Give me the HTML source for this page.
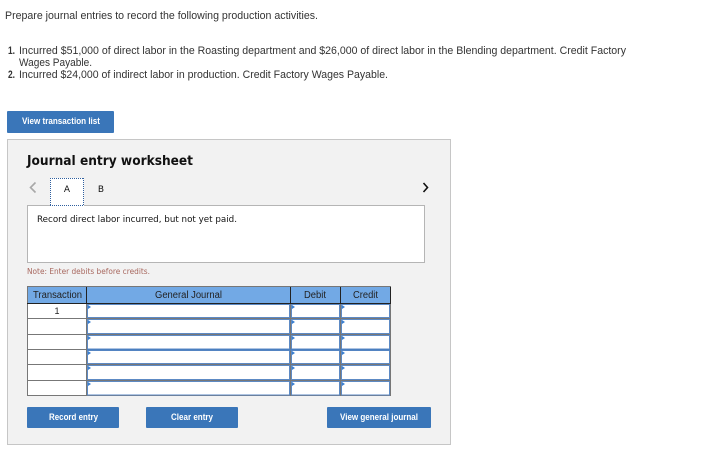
<!DOCTYPE html>
<html><head><meta charset="utf-8"><style>
html,body{margin:0;padding:0;background:#fff;width:719px;height:470px;overflow:hidden}
svg{display:block}
.p{font-family:"Liberation Sans",sans-serif;font-size:11px;fill:#333}
.v{font-family:"DejaVu Sans",sans-serif;fill:#111}
.b{font-family:"Liberation Sans",sans-serif;font-weight:bold;font-size:9px;fill:#fff}
.h{font-family:"Liberation Sans",sans-serif;font-size:10px;fill:#222}
</style></head><body>
<svg width="719" height="470" viewBox="0 0 719 470" xmlns="http://www.w3.org/2000/svg">
<text class="p" x="5" y="19" textLength="313" lengthAdjust="spacingAndGlyphs">Prepare journal entries to record the following production activities.</text>
<text class="p" x="8" y="54" textLength="7" lengthAdjust="spacingAndGlyphs" font-weight="bold">1.</text>
<text class="p" x="19" y="54" textLength="607" lengthAdjust="spacingAndGlyphs">Incurred $51,000 of direct labor in the Roasting department and $26,000 of direct labor in the Blending department. Credit Factory</text>
<text class="p" x="19" y="66" textLength="73" lengthAdjust="spacingAndGlyphs">Wages Payable.</text>
<text class="p" x="8" y="78" textLength="7" lengthAdjust="spacingAndGlyphs" font-weight="bold">2.</text>
<text class="p" x="19" y="78" textLength="369" lengthAdjust="spacingAndGlyphs">Incurred $24,000 of indirect labor in production. Credit Factory Wages Payable.</text>

<rect x="7" y="111" width="107" height="22" rx="1" fill="#3a76b9"/>
<text class="b" x="22" y="124" textLength="78" lengthAdjust="spacingAndGlyphs">View transaction list</text>

<rect x="7.5" y="139.5" width="443" height="305" fill="#f2f2f2" stroke="#c6c6c6"/>
<text class="v" x="27" y="165" font-size="13" font-weight="bold" textLength="166" lengthAdjust="spacingAndGlyphs">Journal entry worksheet</text>
<path d="M35.5 182.5L30.5 187.5L35.5 192.5" fill="none" stroke="#a8a8a8" stroke-width="1.6"/>
<path d="M423.5 183L427.5 187.5L423.5 192" fill="none" stroke="#111" stroke-width="1.6"/>

<rect x="27.5" y="205.5" width="397" height="57" fill="#fff" stroke="#b5b5b5"/>
<rect x="50" y="178" width="34" height="28" fill="#fff"/>
<g stroke="#2f5f9e" stroke-width="1" stroke-dasharray="1 1" fill="none" shape-rendering="crispEdges">
<path d="M50 178.5H84"/><path d="M50 205.5H84"/><path d="M50.5 178V206"/><path d="M83.5 178V206"/>
</g>
<text class="v" x="67" y="192" font-size="9" text-anchor="middle">A</text>
<text class="v" x="101" y="192" font-size="9" text-anchor="middle">B</text>
<text class="v" x="37" y="222" font-size="9" textLength="200" lengthAdjust="spacingAndGlyphs">Record direct labor incurred, but not yet paid.</text>
<text class="v" x="27" y="274" font-size="7.5" style="fill:#a8685f" textLength="123" lengthAdjust="spacingAndGlyphs">Note: Enter debits before credits.</text>

<!-- table -->
<rect x="27" y="286" width="364" height="110" fill="#777"/>
<rect x="28" y="287" width="362" height="16" fill="#72a9e5"/>
<rect x="27" y="303" width="364" height="1" fill="#222"/>
<rect x="86" y="287" width="1" height="17" fill="#222"/>
<rect x="290" y="287" width="1" height="17" fill="#222"/>
<rect x="340" y="287" width="1" height="17" fill="#222"/>
<rect x="390" y="287" width="1" height="17" fill="#222"/>
<text class="h" x="33" y="298" textLength="49" lengthAdjust="spacingAndGlyphs">Transaction</text>
<text class="h" x="155" y="298" textLength="67" lengthAdjust="spacingAndGlyphs">General Journal</text>
<text class="h" x="304" y="298" textLength="22" lengthAdjust="spacingAndGlyphs">Debit</text>
<text class="h" x="353" y="298" textLength="25" lengthAdjust="spacingAndGlyphs">Credit</text>

<g fill="#fff">
<rect x="28" y="304" width="58" height="14"/><rect x="28" y="319" width="58" height="15"/><rect x="28" y="335" width="58" height="14"/><rect x="28" y="350" width="58" height="14"/><rect x="28" y="365" width="58" height="15"/><rect x="28" y="381" width="58" height="14"/>
</g>
<text class="h" x="57" y="314" text-anchor="middle" style="font-size:9px">1</text>

<!-- input cells -->
<g fill="#fff" stroke="#5d8ac4" stroke-width="1">
<rect x="87.5" y="304.5" width="202" height="13"/><rect x="291.5" y="304.5" width="48" height="13"/><rect x="341.5" y="304.5" width="48" height="13"/>
<rect x="87.5" y="319.5" width="202" height="14"/><rect x="291.5" y="319.5" width="48" height="14"/><rect x="341.5" y="319.5" width="48" height="14"/>
<rect x="87.5" y="335.5" width="202" height="13.5"/><rect x="291.5" y="335.5" width="48" height="13.5"/><rect x="341.5" y="335.5" width="48" height="13.5"/>
<rect x="87.5" y="350.5" width="202" height="13"/><rect x="291.5" y="350.5" width="48" height="13"/><rect x="341.5" y="350.5" width="48" height="13"/>
<rect x="87.5" y="365.5" width="202" height="14"/><rect x="291.5" y="365.5" width="48" height="14"/><rect x="341.5" y="365.5" width="48" height="14"/>
<rect x="87.5" y="381.5" width="202" height="13.5"/><rect x="291.5" y="381.5" width="48" height="13.5"/><rect x="341.5" y="381.5" width="48" height="13.5"/>
</g>
<rect x="87" y="349" width="303" height="1.5" fill="#4a7fc0"/>
<g fill="#3a7fd0">
<path d="M88 305l3 2-3 2zM292 305l3 2-3 2zM342 305l3 2-3 2z"/>
<path d="M88 320l3 2-3 2zM292 320l3 2-3 2zM342 320l3 2-3 2z"/>
<path d="M88 336l3 2-3 2zM292 336l3 2-3 2zM342 336l3 2-3 2z"/>
<path d="M88 351l3 2-3 2zM292 351l3 2-3 2zM342 351l3 2-3 2z"/>
<path d="M88 366l3 2-3 2zM292 366l3 2-3 2zM342 366l3 2-3 2z"/>
<path d="M88 382l3 2-3 2zM292 382l3 2-3 2zM342 382l3 2-3 2z"/>
</g>

<rect x="27" y="407" width="92" height="21" rx="1" fill="#3a76b9"/>
<text class="b" x="49" y="420" textLength="49" lengthAdjust="spacingAndGlyphs">Record entry</text>
<rect x="146" y="407" width="92" height="21" rx="1" fill="#3a76b9"/>
<text class="b" x="171" y="420" textLength="42" lengthAdjust="spacingAndGlyphs">Clear entry</text>
<rect x="327" y="407" width="104" height="21" rx="1" fill="#3a76b9"/>
<text class="b" x="340" y="420" textLength="78" lengthAdjust="spacingAndGlyphs">View general journal</text>
</svg>
</body></html>
